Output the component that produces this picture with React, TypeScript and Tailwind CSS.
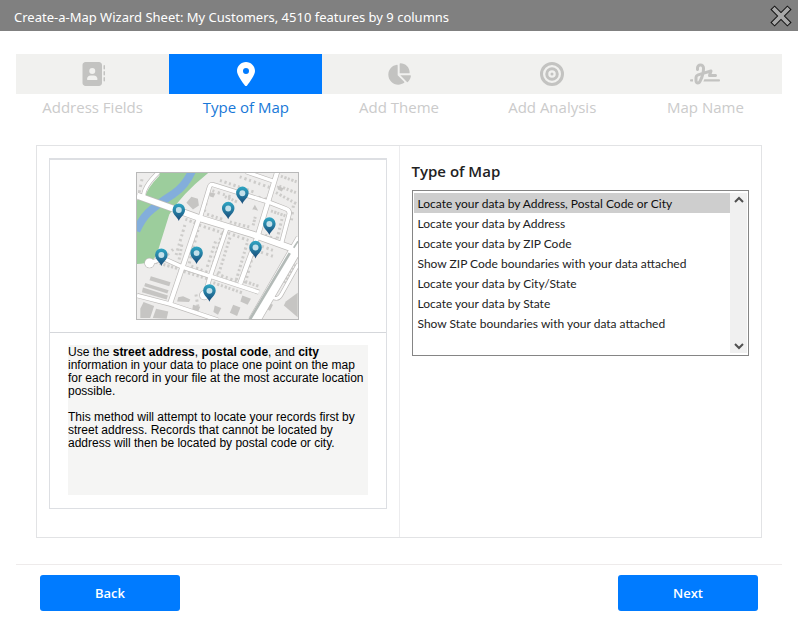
import React, { useState } from "react";
import {
  FaAddressBook,
  FaBullseye,
  FaChartPie,
  FaLocationDot,
  FaSignature,
} from "react-icons/fa6";
import type { IconType } from "react-icons";

type Step = { label: string; icon: IconType; iconClass: string };

const steps: Step[] = [
  { label: "Address Fields", icon: FaAddressBook, iconClass: "size-6" },
  { label: "Type of Map", icon: FaLocationDot, iconClass: "size-6" },
  { label: "Add Theme", icon: FaChartPie, iconClass: "size-6" },
  { label: "Add Analysis", icon: FaBullseye, iconClass: "size-6" },
  { label: "Map Name", icon: FaSignature, iconClass: "h-6 w-[30px]" },
];

const mapTypes = [
  "Locate your data by Address, Postal Code or City",
  "Locate your data by Address",
  "Locate your data by ZIP Code",
  "Show ZIP Code boundaries with your data attached",
  "Locate your data by City/State",
  "Locate your data by State",
  "Show State boundaries with your data attached",
];

const roads: [string, number][] = [
  ["M95 28 Q62 60 54 82 Q48 96 52 108", 10],
  ["M30 400 L130 426 L275 474", 11],
  ["M360 26 L448 56", 10],
  ["M456 26 L395 225 L343 365", 13],
  ["M222 165 L250 72 Q253 62 264 66 L430 118 L482 138 Q495 143 492 155 L467 250", 11],
  ["M218 168 L130 426", 13],
  ["M302 198 L250 350 L236 398", 11],
  ["M68 302 L110 288 L170 315 L400 390", 11],
  ["M520 305 L468 398 Q460 412 448 408 L428 400", 9],
  ["M530 230 L385 478", 34],
  ["M30 98 L225 168 L380 215 L520 265", 18],
];

// Rows of houses: start, end, number of houses.
const houseRows: number[][] = [
  [285, 53, 380, 85, 8], [246, 155, 285, 168, 4], [315, 178, 368, 192, 5],
  [262, 84, 310, 100, 4], [300, 102, 330, 115, 4], [235, 143, 242, 105, 3],
  [383, 185, 388, 165, 3], [402, 103, 420, 108, 2], [345, 42, 430, 72, 7],
  [440, 145, 478, 158, 5], [470, 172, 457, 225, 5], [422, 218, 450, 230, 3],
  [222, 188, 290, 210, 6], [288, 215, 256, 325, 9], [215, 205, 190, 300, 7],
  [268, 240, 245, 310, 6], [198, 312, 240, 328, 4], [310, 212, 366, 232, 5],
  [312, 228, 280, 330, 9], [364, 245, 333, 350, 9], [275, 335, 330, 356, 5],
  [385, 242, 440, 262, 5], [382, 280, 360, 360, 6], [362, 358, 395, 370, 4],
  [175, 190, 150, 275, 7], [138, 263, 125, 275, 2], [180, 170, 205, 180, 3],
  [90, 300, 160, 320, 7], [175, 328, 240, 348, 6], [265, 362, 345, 390, 8],
  [158, 288, 165, 250, 4], [455, 90, 510, 120, 6], [470, 40, 512, 55, 5],
  [465, 70, 510, 88, 5], [505, 132, 500, 170, 3], [45, 52, 38, 85, 3],
  [210, 400, 215, 430, 3], [480, 360, 510, 310, 6], [410, 270, 440, 280, 3],
];

const buildings = [
  "180,120 195,102 215,108 218,128 200,140",
  "72,342 132,360 128,372 68,354",
  "55,362 126,384 122,394 52,372",
  "48,376 124,400 120,412 45,390",
  "50,420 82,432 70,468 40,468 40,440",
  "88,440 125,448 120,470 78,468",
  "155,405 170,402 192,412 188,420 152,418",
  "200,428 222,434 216,448 198,442",
  "266,430 286,438 276,458 262,450",
  "322,428 344,436 334,462 312,452",
  "350,400 376,410 366,428 344,418",
  "430,422 443,428 434,446 422,440",
  "482,418 518,392 518,466 476,430",
  "380,140 388,126 398,144 386,140",
  "250,88 268,92 262,104 250,100",
  "455,68 475,76 470,86 458,80",
];

const pins = [
  [350, 95], [157, 146], [307, 141], [432, 188],
  [390, 259], [211, 276], [104, 282], [250, 390],
];

function StreetMap() {
  return (
    <svg
      viewBox="30 30 489 441"
      preserveAspectRatio="none"
      className="block h-[148px] w-[163px] border border-[#b9b9b9]"
      role="img"
      aria-label="Street map with located points"
    >
      <defs>
        <linearGradient id="pin" x1="0" y1="0" x2="0" y2="1">
          <stop offset="0" stopColor="#2fa6c3" />
          <stop offset="0.5" stopColor="#24799f" />
          <stop offset="1" stopColor="#194875" />
        </linearGradient>
      </defs>
      <rect x="30" y="30" width="489" height="441" fill="#eeedec" />
      <path d="M98 30 H246 Q165 95 128 155 L92 270 Q82 304 30 305 V112 L54 104 Q60 76 98 38 Z" fill="#9ccd9c" />
      <path d="M198 22 Q178 68 142 92 Q90 125 64 150 Q44 170 28 205" fill="none" stroke="#83aedb" strokeWidth="24" />
      {houseRows.map(([x1, y1, x2, y2, n], row) => {
        const angle = (Math.atan2(y2 - y1, x2 - x1) * 180) / Math.PI;
        return Array.from({ length: n }, (_, i) => {
          const x = x1 + ((x2 - x1) * i) / (n - 1);
          const y = y1 + ((y2 - y1) * i) / (n - 1);
          return (
            <rect
              key={`${row}-${i}`}
              x={x - 3}
              y={y - 4}
              width={6 + (i % 2)}
              height="9"
              fill="#cdccca"
              transform={`rotate(${angle} ${x} ${y})`}
            />
          );
        });
      })}
      {buildings.map((points) => (
        <polygon key={points} points={points} fill="#c6c5c3" />
      ))}
      {roads.map(([d, w]) => (
        <path key={d} d={d} fill="none" stroke="#bdbbb9" strokeWidth={w + 4} strokeLinejoin="round" />
      ))}
      <circle cx="68" cy="302" r="16" fill="#bdbbb9" />
      <circle cx="234" cy="399" r="15" fill="#bdbbb9" />
      {roads.map(([d, w]) => (
        <path key={d} d={d} fill="none" stroke="#ffffff" strokeWidth={w} strokeLinejoin="round" />
      ))}
      <circle cx="68" cy="302" r="14" fill="#ffffff" />
      <circle cx="234" cy="399" r="13" fill="#ffffff" />
      <path d="M494 272 L372 474" stroke="#b3bab7" strokeWidth="8" />
      <path d="M519 236 L506 256" stroke="#b3bab7" strokeWidth="5" />
      {pins.map(([x, y]) => (
        <g key={`${x}-${y}`} transform={`translate(${x} ${y})`}>
          <path d="M0 29 C-4 17 -19 10 -19 -5 A19 19 0 0 1 19 -5 C19 10 4 17 0 29 Z" fill="url(#pin)" />
          <circle cx="0" cy="-4" r="9" fill="#c3e0ea" />
        </g>
      ))}
    </svg>
  );
}

function Chevron({ d }: { d: string }) {
  return (
    <svg viewBox="0 0 10 7" className="h-[7px] w-[10px]" aria-hidden="true">
      <path d={d} fill="none" stroke="#505050" strokeWidth="2" />
    </svg>
  );
}

export default function App() {
  const [current, setCurrent] = useState(1);
  const [mapType, setMapType] = useState(mapTypes[0]);

  return (
    <div className="min-h-screen bg-white font-['Open_Sans','Noto_Sans',sans-serif] text-[#222]">
      <header className="flex h-[31px] items-center justify-between bg-[#808080] pr-1.5 pl-3.5">
        <h1 className="pt-0.5 font-['Noto_Sans',sans-serif] text-[13px] leading-5 text-white">
          Create-a-Map Wizard Sheet: My Customers, 4510 features by 9 columns
        </h1>
        <button type="button" aria-label="Close">
          <svg viewBox="0 0 22 22" className="size-[22px]" aria-hidden="true">
            <path d="M2.5 2.5 L19.5 19.5 M19.5 2.5 L2.5 19.5" stroke="#111" strokeWidth="6" />
            <path d="M3.2 3.2 L18.8 18.8 M18.8 3.2 L3.2 18.8" stroke="#a9a9a9" strokeWidth="3.8" />
          </svg>
        </button>
      </header>

      <nav className="mx-4 mt-[23px]" aria-label="Wizard steps">
        <ol className="flex">
          {steps.map(({ label, icon: Icon, iconClass }, i) => (
            <li key={label} className="flex-1">
              <button type="button" onClick={() => setCurrent(i)} className="block w-full text-center">
                <span
                  className={
                    i === current
                      ? "flex h-10 items-center justify-center bg-[#007bff] text-white"
                      : "flex h-10 items-center justify-center bg-[#f1f1ef] text-[#c3c3c1]"
                  }
                >
                  <Icon className={iconClass} aria-hidden="true" />
                </span>
                <span
                  className={
                    i === current
                      ? "block pt-px text-[15px] leading-6 text-[#1878d8]"
                      : "block pt-px text-[15px] leading-6 text-[#cbcbcb]"
                  }
                >
                  {label}
                </span>
              </button>
            </li>
          ))}
        </ol>
      </nav>

      <main className="mx-9 mt-[26px] flex min-h-[393px] border border-[#e2e3e5]">
        <section className="flex-1 p-3">
          <div className="border border-t-2 border-[#dddfe3]">
            <div className="flex justify-center border-b border-[#d5d7db] py-3">
              <StreetMap />
            </div>
            <div className="px-[18px] pt-3 pb-[13px]">
              <div className="min-h-[150px] bg-[#f5f5f4] pt-px font-['Liberation_Sans',Arial,sans-serif] text-[12px] leading-[13px] text-black">
                <p>
                  Use the <b>street address</b>, <b>postal code</b>, and <b>city</b> information in
                  your data to place one point on the map for each record in your file at the most
                  accurate location possible.
                </p>
                <p className="mt-[13px]">
                  This method will attempt to locate your records first by street address. Records
                  that cannot be located by address will then be located by postal code or city.
                </p>
              </div>
            </div>
          </div>
        </section>

        <section className="flex-1 border-l border-[#ececee] p-3">
          <label htmlFor="map-type" className="block pt-px text-[15px] leading-6 font-semibold">
            Type of Map
          </label>
          <div className="mt-[7px] flex h-[166px] border border-[#858585] px-px py-0.5">
            <select
              id="map-type"
              size={7}
              value={mapType}
              onChange={(e) => setMapType(e.target.value)}
              className="min-w-0 flex-1 overflow-hidden font-['Lato',sans-serif] text-[12px] leading-5 outline-none"
            >
              {mapTypes.map((type) => (
                <option key={type} value={type} className="h-5 min-h-5 px-1 pt-[3px] pb-0 leading-4">
                  {type}
                </option>
              ))}
            </select>
            <div className="flex w-[17px] flex-col items-center justify-between bg-[#f0f0f0] py-[3px]">
              <button type="button" aria-label="Scroll up" className="block">
                <Chevron d="M1 6 L5 2 L9 6" />
              </button>
              <button type="button" aria-label="Scroll down" className="block">
                <Chevron d="M1 1 L5 5 L9 1" />
              </button>
            </div>
          </div>
        </section>
      </main>

      <footer className="mx-4 mt-[26px] flex justify-between border-t border-[#eeebeb] px-6 pt-2.5">
        <button type="button" className="h-9 w-[140px] rounded-[3px] bg-[#007bff] pt-0.5 text-[13px] font-semibold text-white">
          Back
        </button>
        <button type="button" className="h-9 w-[140px] rounded-[3px] bg-[#007bff] pt-0.5 text-[13px] font-semibold text-white">
          Next
        </button>
      </footer>
    </div>
  );
}
